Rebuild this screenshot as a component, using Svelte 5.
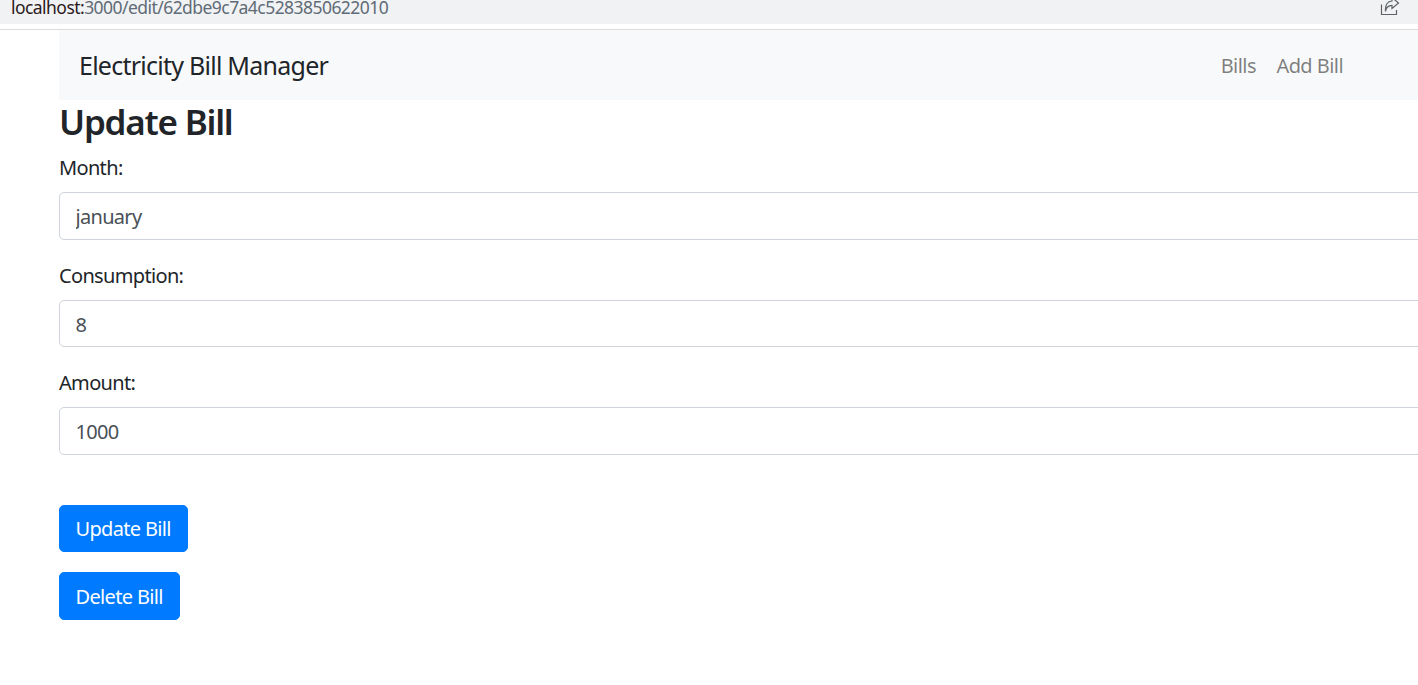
<script>
  let month = $state('january');
  let consumption = $state('8');
  let amount = $state('1000');
</script>

<div class="page">
  <div class="urlbar">
    <span class="url"><span class="host">localhost:</span>3000/edit/62dbe9c7a4c5283850622010</span>
    <svg class="share" width="20" height="18" viewBox="0 0 20 18" fill="none" stroke="#5f6368" stroke-width="1.2">
      <path d="M1.5 5.5V15.5H16.5V11" />
      <path d="M5.5 12.5C6 8.5 8.5 6.5 12 6.3V9.5L18.5 4 12 -1.5V2C7.5 2.5 5 6.5 5.5 12.5Z" />
    </svg>
  </div>
  <div class="rule"></div>
  <div class="container">
    <nav class="navbar">
      <a class="brand" href="#/">Electricity Bill Manager</a>
      <ul class="links">
        <li><a href="#/">Bills</a></li>
        <li><a href="#/">Add Bill</a></li>
      </ul>
    </nav>
    <h3>Update Bill</h3>
    <form onsubmit={(e) => e.preventDefault()}>
      <div class="group">
        <label for="month">Month:</label>
        <input id="month" type="text" bind:value={month} />
      </div>
      <div class="group">
        <label for="consumption">Consumption:</label>
        <input id="consumption" type="text" bind:value={consumption} />
      </div>
      <div class="group">
        <label for="amount">Amount:</label>
        <input id="amount" type="text" bind:value={amount} />
      </div>
      <div class="actions">
        <button type="submit">Update Bill</button>
        <button type="button">Delete Bill</button>
      </div>
    </form>
  </div>
</div>

<style>
  :global(body) {
    margin: 0;
    background: #fff;
    overflow: hidden;
  }
  .page {
    width: 1418px;
    height: 685px;
    overflow: hidden;
    font-family: "Noto Sans", "Open Sans", "Liberation Sans", sans-serif;
    font-size: 20px;
    line-height: 1.5;
    letter-spacing: -0.033em;
    color: #212529;
  }
  .urlbar {
    height: 24px;
    background: #f1f2f4;
    display: flex;
    align-items: flex-start;
    justify-content: space-between;
    padding: 0 18px 0 11px;
    overflow: hidden;
  }
  .url {
    font-size: 17.5px;
    line-height: 24px;
    margin-top: -5px;
    letter-spacing: -0.55px;
    color: #5f6b76;
  }
  .host {
    color: #2b1b1b;
  }
  .share {
    display: block;
    margin-top: -1px;
  }
  .rule {
    height: 1px;
    margin-top: 5px;
    background: #dcdcdc;
  }
  .container {
    width: 1440px;
    margin-left: 59px;
  }
  .navbar {
    box-sizing: border-box;
    display: flex;
    align-items: center;
    justify-content: space-between;
    height: 70px;
    padding: 2px 146px 0 20px;
    background: #f8f9fa;
  }
  .brand {
    font-size: 25px;
    letter-spacing: -0.03em;
    color: #212529;
    text-decoration: none;
  }
  .links {
    display: flex;
    list-style: none;
    margin: 0;
    padding: 0;
  }
  .links a {
    display: block;
    padding: 10px;
    letter-spacing: -0.028em;
    color: rgba(0, 0, 0, 0.5);
    text-decoration: none;
  }
  .links li + li a {
    padding-left: 10.5px;
  }
  h3 {
    font-size: 35px;
    font-weight: 600;
    line-height: 1.2;
    letter-spacing: -0.035em;
    margin: 0;
    padding: 1px 0 9px;
  }
  .group {
    margin-bottom: 20px;
  }
  label {
    display: block;
    padding-top: 1px;
    margin-bottom: 9px;
    line-height: 30px;
  }
  input {
    display: block;
    box-sizing: border-box;
    width: 100%;
    height: 47.5px;
    padding: 8.5px 15px 6.5px 15.5px;
    border: 1.25px solid #ced4da;
    border-radius: 5px;
    background: #fff;
    color: #495057;
    font: inherit;
    letter-spacing: -0.035em;
  }
  .actions {
    display: flex;
    flex-direction: column;
    align-items: flex-start;
    gap: 20px;
    padding-top: 30px;
  }
  button {
    box-sizing: border-box;
    height: 47.5px;
    padding: 8.5px 16px 6.5px 15.5px;
    border: 1.25px solid #007bff;
    border-radius: 5px;
    background: #007bff;
    color: #fff;
    font: inherit;
    letter-spacing: -0.033em;
  }
</style>
